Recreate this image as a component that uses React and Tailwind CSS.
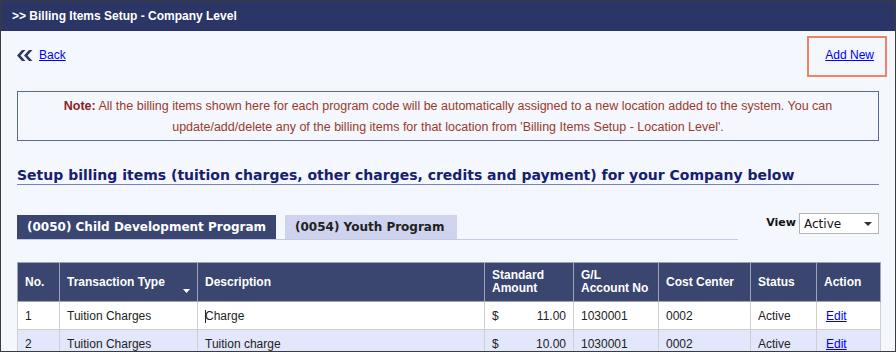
import React from 'react';

const rows = [
    { no: 1, type: 'Tuition Charges', desc: 'Charge', amount: '11.00', gl: '1030001', cc: '0002', status: 'Active', cursor: true },
    { no: 2, type: 'Tuition Charges', desc: 'Tuition charge', amount: '10.00', gl: '1030001', cc: '0002', status: 'Active' },
];

const cols = [
    { label: 'No.', w: 'w-[42px]' },
    { label: 'Transaction Type', w: 'w-[138px]', sort: true },
    { label: 'Description', w: 'w-[287px]' },
    { label: ['Standard', 'Amount'], w: 'w-[89px]' },
    { label: ['G/L', 'Account No'], w: 'w-[85px]' },
    { label: 'Cost Center', w: 'w-[92px]' },
    { label: 'Status', w: 'w-[66px]' },
    { label: 'Action', w: 'w-[64px]' },
];

const BackIcon = () => (
    <svg width="16" height="11" viewBox="0 0 16 11" className="text-[#2c3766]">
        <polygon points="0,5.5 5,0 8.5,0 3.5,5.5 8.5,11 5,11" fill="currentColor" />
        <polygon points="7,5.5 12,0 15.5,0 10.5,5.5 15.5,11 12,11" fill="currentColor" />
    </svg>
);

const App = () => (
    <div className="w-[896px] h-[352px] overflow-hidden bg-[#f4f7fe] border border-[#3b3b3b] font-['Liberation_Sans',Arial,sans-serif] text-[12px] text-[#222]">
        <div className="h-[30px] bg-[#2b3566] flex items-center pl-[11px] text-white font-bold text-[12px]">
            &gt;&gt; Billing Items Setup - Company Level
        </div>

        <div className="px-[16px]">
            <div className="flex items-start justify-between pt-[5px]">
                <div className="flex items-center gap-[6px] pt-[10px]">
                    <BackIcon />
                    <a href="#" className="text-[#0000ee] underline">Back</a>
                </div>
                <div className="border-2 border-[#ee8366] w-[80px] h-[41px] flex justify-end pr-[11px] pt-[8px] -mr-[8px]">
                    <a href="#" className="text-[#0000ee] underline">Add New</a>
                </div>
            </div>

            <div className="mt-[14px] h-[50px] border border-[#5b6a9c] flex flex-col items-center justify-center gap-[5px] text-[#9a3a2a] text-[12.5px] leading-[16px] text-center">
                <div><span className="font-bold text-[#8a1e1e]">Note:</span> All the billing items shown here for each program code will be automatically assigned to a new location added to the system. You can</div>
                <div>update/add/delete any of the billing items for that location from 'Billing Items Setup - Location Level'.</div>
            </div>

            <div className="mt-[26px] border-b border-[#7882b4] font-['DejaVu_Sans',Verdana,sans-serif] font-bold text-[14px] text-[#17206e] leading-[17px]">
                Setup billing items (tuition charges, other charges, credits and payment) for your Company below
            </div>

            <div className="mt-[30px] flex items-start justify-between">
                <div className="flex w-[721px] border-b border-[#c3c9e6] font-['DejaVu_Sans',Verdana,sans-serif] font-bold text-[12px]">
                    <div className="h-[24px] w-[259px] bg-[#3a4570] text-white flex items-center pl-[10px]">(0050) Child Development Program</div>
                    <div className="h-[24px] w-[172px] ml-[9px] bg-[#cfd3ee] text-[#222] flex items-center pl-[10px]">(0054) Youth Program</div>
                </div>
                <div className="flex items-center gap-[3px] -mt-[2px]">
                    <span className="font-['DejaVu_Sans',Verdana,sans-serif] font-bold text-[11px] text-[#111]">View</span>
                    <div className="w-[80px] h-[21px] bg-white border border-[#b5b5b5] flex items-center justify-between pl-[4px] pr-[6px]">
                        <span className="text-[12px] text-[#111] font-['DejaVu_Sans',sans-serif]">Active</span>
                        <svg width="8" height="4" viewBox="0 0 8 4"><polygon points="0,0 8,0 4,4" fill="#333" /></svg>
                    </div>
                </div>
            </div>

            <table className="mt-[22px] w-[863px] table-fixed border-collapse">
                <thead>
                    <tr className="bg-[#3a4570] text-white h-[39px]">
                        {cols.map((c, i) => (
                            <th key={i} className={`${c.w} relative text-left align-middle font-bold text-[12px] leading-[13px] px-[7px] border border-[#9ea3b8]`}>
                                {Array.isArray(c.label) ? (<>{c.label[0]}<br />{c.label[1]}</>) : c.label}
                                {c.sort && (
                                    <svg width="7" height="4" viewBox="0 0 7 4" className="absolute right-[7px] bottom-[8px]">
                                        <polygon points="0,0 7,0 3.5,4" fill="#fff" />
                                    </svg>
                                )}
                            </th>
                        ))}
                    </tr>
                </thead>
                <tbody>
                    {rows.map((r, i) => (
                        <tr key={r.no} className={`h-[28px] ${i % 2 ? 'bg-[#e2e7fb]' : 'bg-white'}`}>
                            <td className="px-[7px] border border-[#cfcfcf]">{r.no}</td>
                            <td className="px-[7px] border border-[#cfcfcf]">{r.type}</td>
                            <td className="px-[7px] border border-[#cfcfcf]">
                                {r.cursor && <span className="inline-block w-px h-[13px] bg-[#222] align-middle -mr-px" />}
                                {r.desc}
                            </td>
                            <td className="px-[7px] border border-[#cfcfcf]">
                                <div className="flex justify-between"><span>$</span><span>{r.amount}</span></div>
                            </td>
                            <td className="px-[7px] border border-[#cfcfcf]">{r.gl}</td>
                            <td className="px-[7px] border border-[#cfcfcf]">{r.cc}</td>
                            <td className="px-[7px] border border-[#cfcfcf]">{r.status}</td>
                            <td className="px-[9px] border border-[#cfcfcf]"><a href="#" className="text-[#0000ee] underline">Edit</a></td>
                        </tr>
                    ))}
                </tbody>
            </table>
        </div>
    </div>
);

export default App;
